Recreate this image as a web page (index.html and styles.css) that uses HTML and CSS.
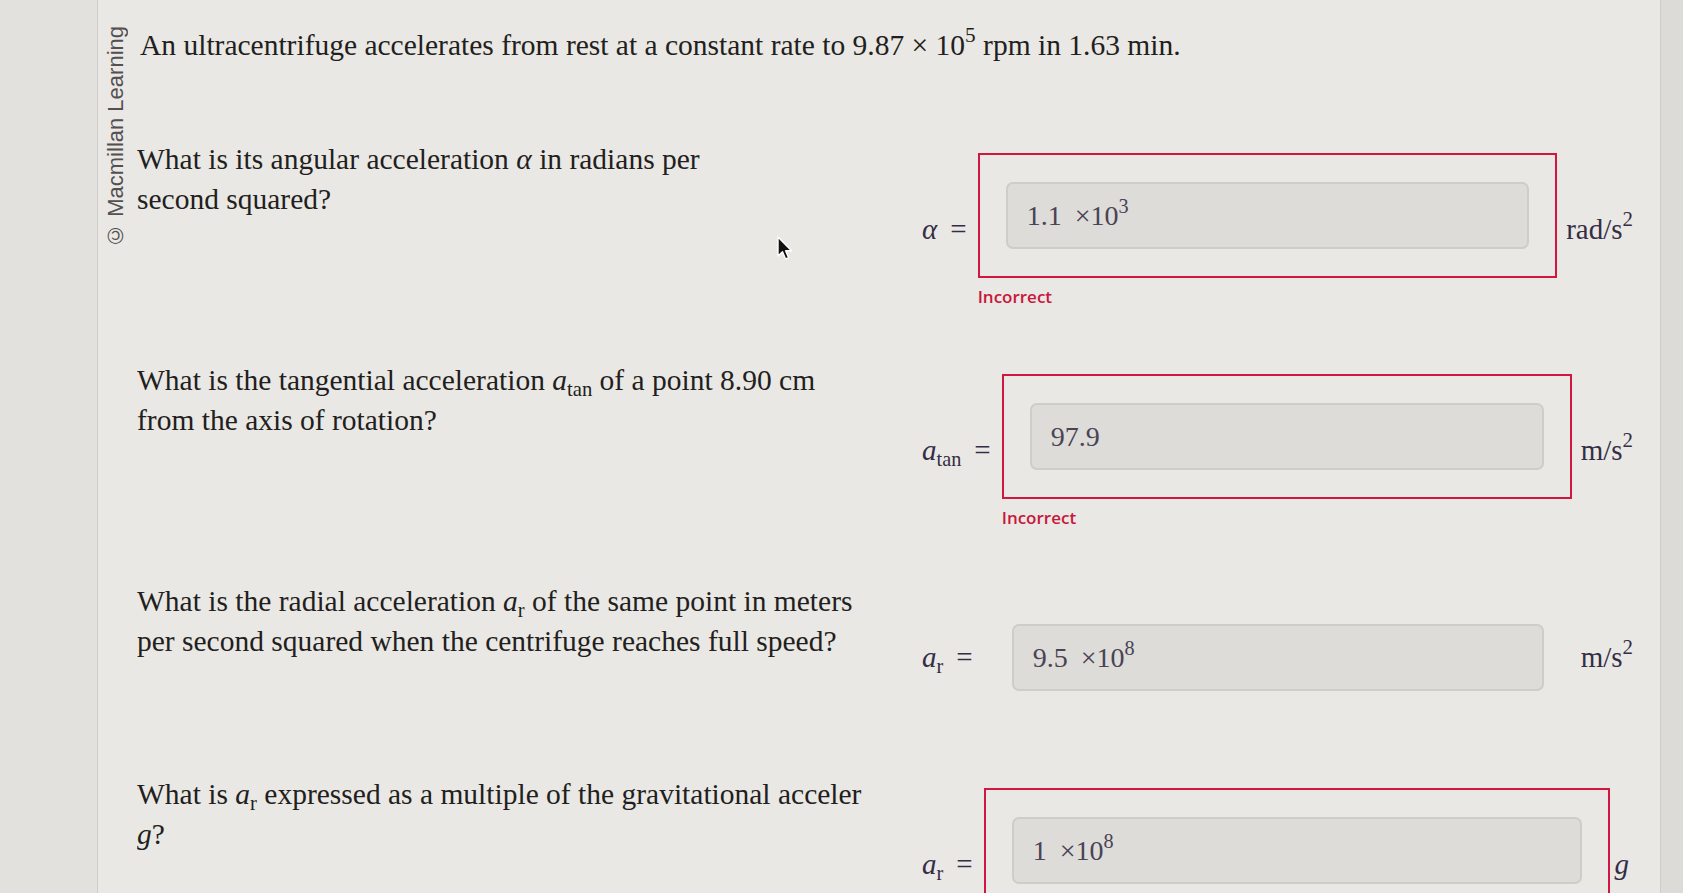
FILE: index.html
```html
<!DOCTYPE html>
<html lang="en">
<head>
<meta charset="utf-8">
<title>Ultracentrifuge</title>
<link rel="stylesheet" href="styles.css">
</head>
<body>
<div class="screen">
  <aside class="sidebar"></aside>
  <main class="page">
    <div class="credit"><span>© Macmillan Learning</span></div>
    <div class="content">
      <p class="intro">An ultracentrifuge accelerates from rest at a constant rate to 9.87 × 10<sup>5</sup> rpm in 1.63 min.</p>

      <section class="question">
        <div class="prompt">What is its angular acceleration <i>α</i> in radians per<br>second squared?</div>
        <div class="answer">
          <span class="var"><i>α</i><span class="eq">=</span></span>
          <div class="field">
            <div class="box box--wrong"><div class="input">1.1<span class="sci">×10<sup>3</sup></span></div></div>
            <div class="feedback">Incorrect</div>
          </div>
          <span class="unit">rad/s<sup>2</sup></span>
        </div>
      </section>

      <section class="question">
        <div class="prompt">What is the tangential acceleration <i>a</i><sub>tan</sub> of a point 8.90 cm<br>from the axis of rotation?</div>
        <div class="answer">
          <span class="var"><i>a</i><sub>tan</sub><span class="eq">=</span></span>
          <div class="field">
            <div class="box box--wrong"><div class="input">97.9</div></div>
            <div class="feedback">Incorrect</div>
          </div>
          <span class="unit">m/s<sup>2</sup></span>
        </div>
      </section>

      <section class="question">
        <div class="prompt">What is the radial acceleration <i>a</i><sub>r</sub> of the same point in meters<br>per second squared when the centrifuge reaches full speed?</div>
        <div class="answer">
          <span class="var"><i>a</i><sub>r</sub><span class="eq">=</span></span>
          <div class="field">
            <div class="box"><div class="input">9.5<span class="sci">×10<sup>8</sup></span></div></div>
          </div>
          <span class="unit">m/s<sup>2</sup></span>
        </div>
      </section>

      <section class="question">
        <div class="prompt">What is <i>a</i><sub>r</sub> expressed as a multiple of the gravitational acceleration<br><i>g</i>?</div>
        <div class="answer">
          <span class="var"><i>a</i><sub>r</sub><span class="eq">=</span></span>
          <div class="field">
            <div class="box box--wrong"><div class="input">1<span class="sci">×10<sup>8</sup></span></div></div>
            <div class="feedback">Incorrect</div>
          </div>
          <span class="unit unit--g"><i>g</i></span>
        </div>
      </section>
    </div>
  </main>
  <div class="rightbar"></div>
  <svg class="cursor" width="18" height="26" viewBox="0 0 18 26" aria-hidden="true">
    <path d="M2 1 L2 20 L6.5 15.8 L9.6 23 L12.6 21.7 L9.6 14.8 L15.5 14.8 Z" fill="#111" stroke="#fff" stroke-width="1.4" stroke-linejoin="round"/>
  </svg>
</div>
</body>
</html>
```

FILE: styles.css
```css
* { box-sizing: border-box; }

html, body {
  margin: 0;
  padding: 0;
  height: 893px;
  overflow: hidden;
}

body {
  background: #e9e8e4;
  font-family: "Liberation Serif", "Times New Roman", serif;
  color: #231e20;
}

.screen {
  position: relative;
  display: flex;
  height: 893px;
}

.sidebar {
  width: 98px;
  flex: none;
  background: #e2e1dd;
  border-right: 1px solid #cfcdc9;
}

.page {
  flex: 1;
  display: flex;
  min-width: 0;
}

.credit {
  width: 39px;
  flex: none;
  padding: 26px 0 0 6px;
}

.credit span {
  display: inline-block;
  writing-mode: vertical-rl;
  transform: rotate(180deg);
  font-family: "Liberation Sans", Arial, sans-serif;
  font-size: 22px;
  line-height: 24px;
  color: #544f52;
}

.content {
  flex: 1;
  min-width: 0;
  padding: 25px 27px 0 0;
}

.intro {
  margin: 0 0 74px 3px;
  font-size: 29.5px;
  line-height: 40px;
  white-space: nowrap;
}

sup {
  font-size: 0.72em;
  line-height: 0;
  vertical-align: 0.62em;
}

sub {
  font-size: 0.7em;
  line-height: 0;
  vertical-align: -0.3em;
}

.question {
  display: grid;
  grid-template-columns: 725px 1fr;
  column-gap: 60px;
  align-items: start;
  margin-bottom: 54px;
}

.prompt {
  font-size: 29.5px;
  line-height: 40px;
  white-space: nowrap;
  overflow: hidden;
}

.answer {
  display: flex;
  align-items: center;
  margin-top: 14px;
  color: #352d45;
}

.var {
  flex: none;
  font-size: 29px;
  margin-right: 11px;
  white-space: nowrap;
}

.eq {
  margin-left: 0.45em;
}

.field {
  flex: 1;
  min-width: 0;
}

.box {
  border: 2px solid transparent;
  padding: 27px 26px;
}

.box--wrong {
  border-color: #d1173f;
}

.input {
  height: 67px;
  display: flex;
  align-items: center;
  padding: 0 19px;
  background: #dddcd8;
  border: 2px solid #cecdc9;
  border-radius: 7px;
  font-size: 28px;
  color: #4a4356;
}

.sci {
  margin-left: 13px;
}

.feedback {
  margin-top: 10px;
  font-family: "Open Sans", "Liberation Sans", sans-serif;
  font-weight: 600;
  font-size: 17px;
  line-height: 18px;
  color: #c8173c;
}

.unit {
  flex: none;
  margin-left: 9px;
  font-size: 29px;
  white-space: nowrap;
}

.unit--g {
  margin-left: 5px;
  margin-right: 4px;
}

.rightbar {
  width: 23px;
  flex: none;
  background: #dcdbd7;
  border-left: 1px solid #cfcdc9;
}

.cursor {
  position: absolute;
  left: 776px;
  top: 236px;
}
```
